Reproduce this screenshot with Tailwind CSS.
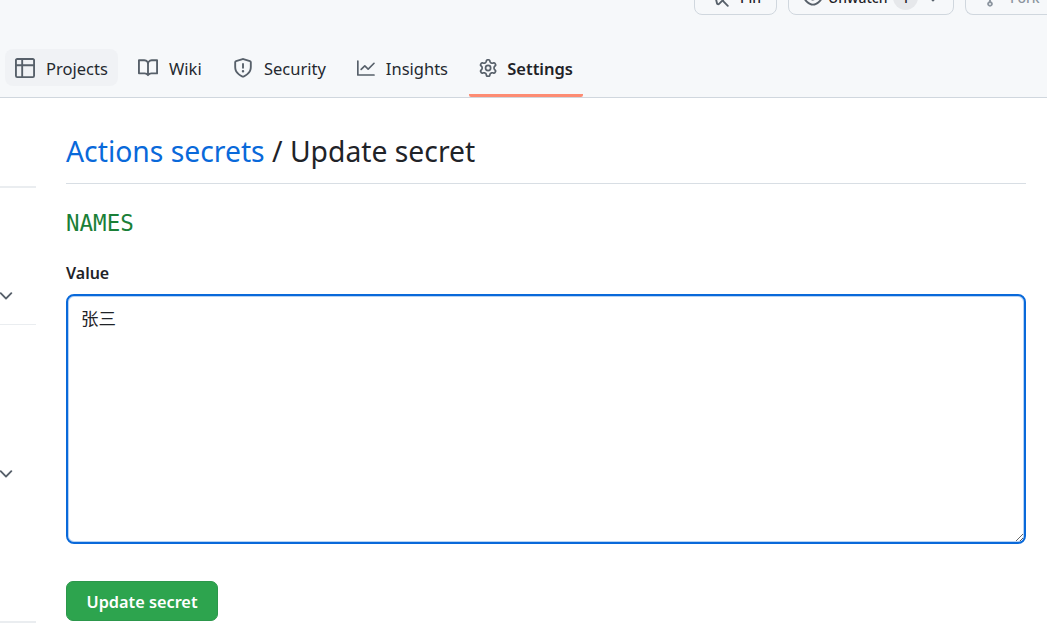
<!DOCTYPE html>
<html lang="en">
<head>
    <meta charset="UTF-8">
    <title>Update secret</title>
    <script src="https://cdn.jsdelivr.net/npm/@tailwindcss/browser@4"></script>
</head>
<body class="h-[642px] w-[1047px] overflow-hidden bg-white font-['Noto_Sans','Noto_Sans_CJK_SC',sans-serif] text-[#1f2328]">
    <header class="h-[98px] bg-[#f6f8fa] border-b border-[#d0d7de] flex flex-col">
        <div class="h-[15px] flex justify-end items-end gap-[11px] overflow-hidden text-[14px] font-medium">
            <div class="w-[83px] h-[35px] shrink-0 border border-[#d0d7de] rounded-[8px] flex items-center pl-[15px] gap-[10px]">
                <svg class="w-[20px] h-[20px] text-[#57606a]" viewBox="0 0 16 16" fill="currentColor"><path d="M4.456.734a1.750 1.750 0 0 1 2.826.504l.613 1.327a3.081 3.081 0 0 0 2.084 1.707l2.454.584c1.332.317 1.800 1.972.832 2.940L11.060 10l3.720 3.720a.748.748 0 0 1-.332 1.265.75.75 0 0 1-.729-.205L10 11.060l-2.204 2.205c-.968.968-2.623.5-2.940-.832l-.584-2.454a3.081 3.081 0 0 0-1.707-2.084l-1.327-.613a1.750 1.750 0 0 1-.504-2.826L4.456.734ZM5.920 1.866a.251.251 0 0 0-.404-.072L1.794 5.516a.25.25 0 0 0 .072.404l1.328.613A4.582 4.582 0 0 1 5.730 9.630l.584 2.454a.25.25 0 0 0 .42.12l5.470-5.470a.25.25 0 0 0-.12-.42L9.630 6.200a4.580 4.580 0 0 1-3.098-2.537L5.920 1.866Z"/></svg>
                <span>Pin</span>
            </div>
            <div class="w-[166px] h-[35px] shrink-0 border border-[#d0d7de] rounded-[8px] flex items-center pl-[14px]">
                <svg class="w-[20px] h-[20px] text-[#57606a]" viewBox="0 0 16 16" fill="currentColor"><path d="M8 2c1.981 0 3.671.992 4.933 2.078 1.270 1.091 2.187 2.345 2.637 3.023a1.620 1.620 0 0 1 0 1.798c-.45.678-1.367 1.932-2.637 3.023C11.670 13.008 9.981 14 8 14c-1.981 0-3.671-.992-4.933-2.078C1.797 10.830.880 9.576.430 8.898a1.620 1.620 0 0 1 0-1.798c.45-.677 1.367-1.931 2.637-3.022C4.330 2.992 6.019 2 8 2ZM1.679 7.932a.12.12 0 0 0 0 .136c.411.622 1.241 1.750 2.366 2.717C5.176 11.758 6.527 12.500 8 12.500c1.473 0 2.825-.742 3.955-1.715 1.124-.967 1.954-2.096 2.366-2.717a.12.12 0 0 0 0-.136c-.412-.621-1.242-1.750-2.366-2.717C10.824 4.242 9.473 3.500 8 3.500c-1.473 0-2.825.742-3.955 1.715-1.124.967-1.954 2.096-2.366 2.717ZM8 10a2 2 0 1 1-.001-3.999A2 2 0 0 1 8 10Z"/></svg>
                <span class="ml-[5px] w-[60px] whitespace-nowrap">Unwatch</span>
                <span class="ml-[5px] w-[25px] h-[25px] rounded-full bg-[#e6e8eb] flex items-center justify-center">1</span>
                <svg class="ml-[5px] w-[20px] h-[20px] text-[#57606a]" viewBox="0 0 16 16" fill="currentColor"><path d="M4.427 7.427l3.396 3.396a.25.25 0 0 0 .354 0l3.396-3.396A.25.25 0 0 0 11.396 7H4.604a.25.25 0 0 0-.177.427Z"/></svg>
            </div>
            <div class="w-[82px] h-[35px] shrink-0 border border-[#d0d7de] rounded-l-[8px] border-r-0 flex items-center pl-[14px] gap-[10px] text-[#8c959f]">
                <svg class="w-[20px] h-[20px]" viewBox="0 0 16 16" fill="currentColor"><path d="M5 5.372v.878c0 .414.336.75.75.75h4.500a.75.75 0 0 0 .75-.75v-.878a2.250 2.250 0 1 1 1.500 0v.878a2.250 2.250 0 0 1-2.250 2.250h-1.500v2.128a2.251 2.251 0 1 1-1.500 0V8.500h-1.500A2.250 2.250 0 0 1 3.500 6.250v-.878a2.250 2.250 0 1 1 1.500 0ZM5 3.250a.75.75 0 1 0-1.500 0 .75.75 0 0 0 1.500 0Zm6.750.75a.75.75 0 1 0 0-1.500.75.75 0 0 0 0 1.500Zm-3 8.750a.75.75 0 1 0-1.500 0 .75.75 0 0 0 1.500 0Z"/></svg>
                <span>Fork</span>
            </div>
        </div>
        <nav class="flex-1 flex items-stretch pl-[5px] gap-[11px] text-[16.500px] text-[#24292f]">
            <div class="w-[113px] -mr-[1px] pt-[34px] pb-[11px]">
                <div class="h-[37px] px-[10px] rounded-[8px] bg-[#f0f2f5] flex items-center gap-[11px]">
                    <svg class="w-[20px] h-[20px] text-[#57606a]" viewBox="0 0 16 16" fill="currentColor"><path d="M0 1.750C0 .784.784 0 1.750 0h12.500C15.216 0 16 .784 16 1.750v12.500A1.750 1.750 0 0 1 14.250 16H1.750A1.750 1.750 0 0 1 0 14.250ZM6.500 6.500v8h7.750a.25.25 0 0 0 .25-.25V6.500Zm8-1.500V1.750a.25.25 0 0 0-.25-.25H6.500V5Zm-13 1.500v7.750c0 .138.112.25.25.25H5v-8ZM5 5V1.500H1.750a.25.25 0 0 0-.25.25V5Z"/></svg>
                    <span class="pt-[4px]">Projects</span>
                </div>
            </div>
            <div class="w-[84px] pt-[34px] pb-[11px]">
                <div class="h-[37px] px-[10px] flex items-center gap-[11px]">
                    <svg class="w-[20px] h-[20px] text-[#57606a]" viewBox="0 0 16 16" fill="currentColor"><path d="M0 1.750A.75.75 0 0 1 .75 1h4.253c1.227 0 2.317.59 3 1.501A3.743 3.743 0 0 1 11.006 1h4.245a.75.75 0 0 1 .75.75v10.500a.75.75 0 0 1-.75.75h-4.507a2.250 2.250 0 0 0-1.591.659l-.622.621a.75.75 0 0 1-1.060 0l-.622-.621A2.250 2.250 0 0 0 5.258 13H.75a.75.75 0 0 1-.75-.75Zm7.251 10.324.004-5.073-.002-2.253A2.250 2.250 0 0 0 5.003 2.500H1.500v9h3.757a3.750 3.750 0 0 1 1.994.574ZM8.755 4.750l-.004 7.322a3.752 3.752 0 0 1 1.992-.572H14.500v-9h-3.495a2.250 2.250 0 0 0-2.250 2.250Z"/></svg>
                    <span class="pt-[4px]">Wiki</span>
                </div>
            </div>
            <div class="w-[113px] pt-[34px] pb-[11px]">
                <div class="h-[37px] px-[10px] flex items-center gap-[11px]">
                    <svg class="w-[20px] h-[20px] text-[#57606a]" viewBox="0 0 16 16" fill="currentColor"><path d="M7.467.133a1.748 1.748 0 0 1 1.066 0l5.250 1.680A1.750 1.750 0 0 1 15 3.480V7c0 1.566-.32 3.182-1.303 4.682-.983 1.498-2.585 2.813-5.032 3.855a1.697 1.697 0 0 1-1.330 0c-2.447-1.042-4.049-2.357-5.032-3.855C1.320 10.182 1 8.566 1 7V3.480a1.750 1.750 0 0 1 1.217-1.667Zm.61 1.429a.25.25 0 0 0-.153 0l-5.250 1.680a.25.25 0 0 0-.174.238V7c0 1.358.275 2.666 1.057 3.860.784 1.194 2.121 2.340 4.366 3.297a.196.196 0 0 0 .154 0c2.245-.956 3.582-2.104 4.366-3.298C13.225 9.666 13.500 8.360 13.500 7V3.480a.251.251 0 0 0-.174-.237l-5.250-1.680ZM8.750 4.750v3a.75.75 0 0 1-1.500 0v-3a.75.75 0 0 1 1.500 0ZM9 10.500a1 1 0 1 1-2 0 1 1 0 0 1 2 0Z"/></svg>
                    <span class="pt-[4px]">Security</span>
                </div>
            </div>
            <div class="w-[111px] pt-[34px] pb-[11px]">
                <div class="h-[37px] px-[10px] flex items-center gap-[11px]">
                    <svg class="w-[20px] h-[20px] text-[#57606a]" viewBox="0 0 16 16" fill="currentColor"><path d="M1.500 1.750V13.500h13.750a.75.75 0 0 1 0 1.500H.75a.75.75 0 0 1-.75-.75V1.750a.75.75 0 0 1 1.500 0Zm14.280 2.530-5.250 5.250a.75.75 0 0 1-1.060 0L7 7.060 4.280 9.780a.751.751 0 0 1-1.042-.018.751.751 0 0 1-.018-1.042l3.250-3.250a.75.75 0 0 1 1.060 0L10 7.940l4.720-4.720a.751.751 0 0 1 1.042.018.751.751 0 0 1 .018 1.042Z"/></svg>
                    <span class="pt-[4px]">Insights</span>
                </div>
            </div>
            <div class="w-[114px] pt-[34px] pb-[8px] border-b-[3px] border-[#fd8c73] rounded-b-[2px]">
                <div class="h-[37px] px-[10px] flex items-center gap-[10px] font-semibold text-[#1f2328]">
                    <svg class="w-[20px] h-[20px] text-[#57606a]" viewBox="0 0 16 16" fill="currentColor"><path d="M8 0a8.200 8.200 0 0 1 .701.031C9.444.095 9.990.645 10.160 1.290l.288 1.107c.018.066.079.158.212.224.231.114.454.243.668.386.123.082.233.09.299.071l1.103-.303c.644-.176 1.392.021 1.820.63.27.385.506.792.704 1.218.315.675.111 1.422-.364 1.891l-.814.806c-.049.048-.098.147-.088.294.016.257.016.515 0 .772-.01.147.038.246.088.294l.814.806c.475.469.679 1.216.364 1.891a7.977 7.977 0 0 1-.704 1.217c-.428.61-1.176.807-1.820.63l-1.102-.302c-.067-.019-.177-.011-.3.071a5.909 5.909 0 0 1-.668.386c-.133.066-.194.158-.211.224l-.29 1.106c-.168.646-.715 1.196-1.458 1.260a8.006 8.006 0 0 1-1.402 0c-.743-.064-1.289-.614-1.458-1.260l-.289-1.106c-.018-.066-.079-.158-.212-.224a5.738 5.738 0 0 1-.668-.386c-.123-.082-.233-.09-.299-.071l-1.103.303c-.644.176-1.392-.021-1.820-.63a8.120 8.120 0 0 1-.704-1.218c-.315-.675-.111-1.422.363-1.891l.815-.806c.05-.048.098-.147.088-.294a6.214 6.214 0 0 1 0-.772c.01-.147-.038-.246-.088-.294l-.815-.806C.635 6.045.431 5.298.746 4.623a7.920 7.920 0 0 1 .704-1.217c.428-.61 1.176-.807 1.820-.63l1.102.302c.067.019.177.011.3-.071.214-.143.437-.272.668-.386.133-.066.194-.158.211-.224l.29-1.106C6.009.645 6.556.095 7.299.03 7.530.01 7.764 0 8 0Zm-.571 1.525c-.036.003-.108.036-.137.146l-.289 1.105c-.147.561-.549.967-.998 1.189-.173.086-.34.183-.5.29-.417.278-.97.423-1.529.27l-1.103-.303c-.109-.03-.175.016-.195.045-.22.312-.412.644-.573.99-.014.031-.021.11.059.19l.815.806c.411.406.562.957.53 1.456a4.709 4.709 0 0 0 0 .582c.032.499-.119 1.050-.53 1.456l-.815.806c-.081.08-.073.159-.059.19.162.346.353.677.573.989.02.03.085.076.195.046l1.102-.303c.56-.153 1.113-.008 1.530.27.161.107.328.204.501.29.447.222.85.629.997 1.189l.289 1.105c.029.109.101.143.137.146a6.600 6.600 0 0 0 1.142 0c.036-.003.108-.036.137-.146l.289-1.105c.147-.561.549-.967.998-1.189.173-.086.34-.183.5-.29.417-.278.97-.423 1.529-.27l1.103.303c.109.029.175-.016.195-.045.22-.313.411-.644.573-.99.014-.031.021-.11-.059-.19l-.815-.806c-.411-.406-.562-.957-.53-1.456a4.709 4.709 0 0 0 0-.582c-.032-.499.119-1.050.53-1.456l.815-.806c.081-.08.073-.159.059-.19a6.464 6.464 0 0 0-.573-.989c-.02-.03-.085-.076-.195-.046l-1.102.303c-.56.153-1.113.008-1.530-.27a4.440 4.440 0 0 0-.501-.29c-.447-.222-.85-.629-.997-1.189l-.289-1.105c-.029-.11-.101-.143-.137-.146a6.600 6.600 0 0 0-1.142 0ZM11 8a3 3 0 1 1-6 0 3 3 0 0 1 6 0ZM9.500 8a1.500 1.500 0 1 0-3.001.001A1.500 1.500 0 0 0 9.500 8Z"/></svg>
                    <span class="pt-[4px]">Settings</span>
                </div>
            </div>
        </nav>
    </header>

    <div class="flex">
        <aside class="w-[36px] shrink-0 pt-[88px] flex flex-col">
            <div class="h-[2px] bg-[#eaedf0]"></div>
            <div class="h-[136px] flex items-end pb-[18px]">
                <svg class="w-[20px] h-[20px] -ml-[4px] text-[#57606a]" viewBox="0 0 16 16" fill="currentColor"><path d="M12.780 5.220a.749.749 0 0 1 0 1.060l-4.250 4.250a.749.749 0 0 1-1.060 0L3.220 6.280a.749.749 0 1 1 1.060-1.060L8 8.939l3.720-3.719a.749.749 0 0 1 1.060 0Z"/></svg>
            </div>
            <div class="h-px bg-[#eaedf0]"></div>
            <div class="h-[296px] flex flex-col">
                <div class="mt-[139px]">
                    <svg class="w-[20px] h-[20px] -ml-[4px] text-[#57606a]" viewBox="0 0 16 16" fill="currentColor"><path d="M12.780 5.220a.749.749 0 0 1 0 1.060l-4.250 4.250a.749.749 0 0 1-1.060 0L3.220 6.280a.749.749 0 1 1 1.060-1.060L8 8.939l3.720-3.719a.749.749 0 0 1 1.060 0Z"/></svg>
                </div>
            </div>
            <div class="h-[2px] bg-[#eaedf0]"></div>
        </aside>

        <main class="ml-[30px] w-[960px]">
            <h1 class="h-[86px] pt-[31px] border-b border-[#d8dee4] text-[28.300px] leading-[44px]"><a class="text-[#0969da]">Actions secrets</a> / Update secret</h1>
            <p class="mt-[24px] font-['DejaVu_Sans_Mono',monospace] text-[22.500px] leading-[30px] text-[#1a7f37]">NAMES</p>
            <label class="block mt-[22px] text-[16px] leading-[26px] font-semibold">Value</label>
            <textarea class="block mt-[8px] w-[960px] h-[250px] px-[13px] py-[9px] border-2 border-[#0969da] rounded-[8px] shadow-[inset_0_0_0_1px_rgba(9,105,218,0.3)] text-[17.500px] leading-[26px] outline-none">张三</textarea>
            <button class="mt-[37px] w-[152px] h-[40px] pt-[3px] rounded-[7px] bg-[#2da44e] border border-[#2c974b] text-white text-[16.300px] font-semibold">Update secret</button>
        </main>
    </div>
</body>
</html>
